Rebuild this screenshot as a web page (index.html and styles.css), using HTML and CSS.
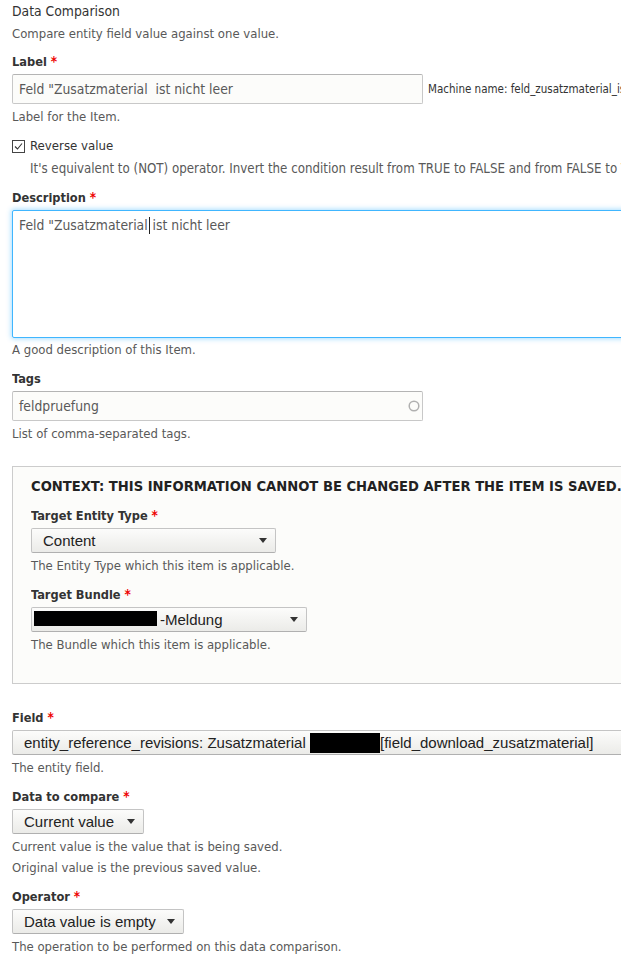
FILE: index.html
```html
<!DOCTYPE html>
<html lang="de">
<head>
    <meta charset="UTF-8">
    <meta name="viewport" content="width=device-width, initial-scale=1.0">
    <title>Data Comparison</title>
    <link rel="stylesheet" href="styles.css">
</head>
<body>
    <div class="page">
        <div class="plugin-title">Data Comparison</div>
        <div class="plugin-desc">Compare entity field value against one value.</div>

        <div class="form-item">
            <div class="form-label">Label <span class="req">*</span></div>
            <div class="inline-row">
                <div class="text-input">Feld "Zusatzmaterial  ist nicht leer</div>
                <span class="machine-name">Machine name: feld_zusatzmaterial_ist_nicht_leer</span>
            </div>
            <div class="help">Label for the Item.</div>
        </div>

        <div class="form-item">
            <div class="check-row">
                <svg class="checkbox" width="13" height="13" viewBox="0 0 13 13">
                    <rect x="0.5" y="0.5" width="12" height="12" fill="#fff" stroke="#444"/>
                    <polyline points="3,6.5 5.5,9 10,3.5" fill="none" stroke="#333" stroke-width="1.1"/>
                </svg>
                <span class="check-label">Reverse value</span>
            </div>
            <div class="help indent">It's equivalent to (NOT) operator. Invert the condition result from TRUE to FALSE and from FALSE to TRUE.</div>
        </div>

        <div class="form-item">
            <div class="form-label">Description <span class="req">*</span></div>
            <div class="textarea">Feld "Zusatzmaterial<span class="caret"></span> ist nicht leer</div>
            <div class="help tight">A good description of this Item.</div>
        </div>

        <div class="form-item">
            <div class="form-label">Tags</div>
            <div class="text-input autocomplete">
                <span>feldpruefung</span>
                <svg width="12" height="12" viewBox="0 0 12 12">
                    <circle cx="6" cy="6" r="4.8" fill="none" stroke="#b0b0b0" stroke-width="1.5"/>
                </svg>
            </div>
            <div class="help">List of comma-separated tags.</div>
        </div>

        <div class="fieldset">
            <div class="legend">CONTEXT: THIS INFORMATION CANNOT BE CHANGED AFTER THE ITEM IS SAVED.</div>

            <div class="form-item">
                <div class="form-label">Target Entity Type <span class="req">*</span></div>
                <div class="select w-entity">
                    <span>Content</span>
                    <svg class="arrow" width="8" height="5" viewBox="0 0 8 5"><polygon points="0,0 8,0 4,5" fill="#333"/></svg>
                </div>
                <div class="help">The Entity Type which this item is applicable.</div>
            </div>

            <div class="form-item last">
                <div class="form-label">Target Bundle <span class="req">*</span></div>
                <div class="select w-bundle">
                    <span><span class="redact bundle"></span>-Meldung</span>
                    <svg class="arrow" width="8" height="5" viewBox="0 0 8 5"><polygon points="0,0 8,0 4,5" fill="#333"/></svg>
                </div>
                <div class="help">The Bundle which this item is applicable.</div>
            </div>
        </div>

        <div class="form-item">
            <div class="form-label">Field <span class="req">*</span></div>
            <div class="select w-field">
                <span>entity_reference_revisions: Zusatzmaterial <span class="redact field"></span>[field_download_zusatzmaterial]</span>
                <svg class="arrow" width="8" height="5" viewBox="0 0 8 5"><polygon points="0,0 8,0 4,5" fill="#333"/></svg>
            </div>
            <div class="help">The entity field.</div>
        </div>

        <div class="form-item">
            <div class="form-label">Data to compare <span class="req">*</span></div>
            <div class="select w-compare">
                <span>Current value</span>
                <svg class="arrow" width="8" height="5" viewBox="0 0 8 5"><polygon points="0,0 8,0 4,5" fill="#333"/></svg>
            </div>
            <div class="help">Current value is the value that is being saved.</div>
            <div class="help">Original value is the previous saved value.</div>
        </div>

        <div class="form-item">
            <div class="form-label">Operator <span class="req">*</span></div>
            <div class="select w-operator">
                <span>Data value is empty</span>
                <svg class="arrow" width="8" height="5" viewBox="0 0 8 5"><polygon points="0,0 8,0 4,5" fill="#333"/></svg>
            </div>
            <div class="help">The operation to be performed on this data comparison.</div>
        </div>
    </div>
</body>
</html>
```

FILE: styles.css
```css
html, body {
    margin: 0;
    overflow: hidden;
    background-color: #fff;
}
body {
    font-family: "DejaVu Sans Condensed", "DejaVu Sans", sans-serif;
    color: #333;
}
.page {
    padding: 2px 0 0 12px;
    width: 900px;
}
.plugin-title {
    font-size: 13.8px;
    line-height: 18px;
    color: #333;
}
.plugin-desc {
    font-size: 13px;
    line-height: 18px;
    margin-top: 5px;
    margin-bottom: 10px;
    color: #595959;
}
.form-item {
    margin-bottom: 11px;
}
.form-item.last {
    margin-bottom: 0;
}
.form-label {
    height: 18px;
    font-size: 12.7px;
    font-weight: bold;
    line-height: 18px;
    margin-bottom: 3px;
    color: #333;
    overflow: hidden;
}
.req {
    color: #e00;
    font-size: 13.5px;
    line-height: 1;
}
.help {
    height: 18px;
    font-size: 13px;
    line-height: 18px;
    margin-top: 4px;
    color: #595959;
}
.help + .help {
    margin-top: 3px;
}
.help.tight {
    margin-top: 3px;
}
.help.indent {
    padding-left: 18px;
    margin-top: 5px;
    font-size: 13.2px;
    white-space: nowrap;
}
.inline-row {
    display: flex;
    align-items: center;
}
.text-input {
    box-sizing: border-box;
    width: 411px;
    height: 30px;
    padding: 0 6px;
    border: 1px solid #c8c8c8;
    border-top-color: #b4b4b4;
    border-radius: 2px;
    background-color: #fcfcfa;
    font-size: 13.8px;
    line-height: 28px;
    color: #595959;
    white-space: pre;
}
.autocomplete {
    display: flex;
    align-items: center;
    justify-content: space-between;
    padding-right: 2px;
}
.autocomplete svg {
    display: block;
}
.machine-name {
    margin-left: 5px;
    font-size: 11.5px;
    color: #333;
    white-space: nowrap;
}
.check-row {
    display: flex;
    align-items: center;
    height: 18px;
}
.checkbox {
    display: block;
    margin-right: 5px;
}
.check-label {
    font-size: 13.1px;
    line-height: 18px;
    color: #333;
}
.textarea {
    box-sizing: border-box;
    width: 720px;
    height: 128px;
    padding: 5px 6px;
    border: 1px solid #40b6ff;
    border-radius: 2px;
    background-color: #fff;
    box-shadow: 0 0 5px 1px rgba(64, 182, 255, 0.45);
    font-size: 13.8px;
    line-height: 18px;
    color: #595959;
}
.caret {
    display: inline-block;
    width: 1px;
    height: 17px;
    margin-left: 1px;
    margin-right: -1px;
    background-color: #222;
    vertical-align: -4px;
}
.fieldset {
    box-sizing: border-box;
    width: 720px;
    margin: 23px 0 25px;
    padding: 10px 18px 29px;
    border: 1px solid #ccc;
    background-color: #fcfcfa;
}
.legend {
    font-size: 14.6px;
    font-weight: bold;
    line-height: 18px;
    margin-bottom: 12px;
    color: #222;
    white-space: nowrap;
}
.select {
    box-sizing: border-box;
    display: flex;
    align-items: center;
    justify-content: space-between;
    height: 25px;
    padding: 0 8px 0 11px;
    border: 1px solid #c4c4c4;
    border-bottom-color: #b0b0b0;
    border-radius: 2px;
    background: linear-gradient(to bottom, #fcfcfb, #ebebe8);
    font-family: "Liberation Sans", Arial, sans-serif;
    font-size: 15px;
    line-height: 23px;
    color: #222;
    white-space: nowrap;
}
.select .arrow {
    display: block;
    flex-shrink: 0;
}
.w-entity { width: 245px; }
.w-bundle { width: 276px; }
.w-field { width: 720px; }
.w-compare { width: 132px; }
.w-operator { width: 172px; }
.redact {
    display: inline-block;
    background-color: #000;
}
.redact.bundle {
    width: 123px;
    height: 15px;
    margin-left: -9px;
    margin-right: 3px;
    vertical-align: -1px;
}
.redact.field {
    width: 70px;
    height: 20px;
    vertical-align: -5px;
}
```
